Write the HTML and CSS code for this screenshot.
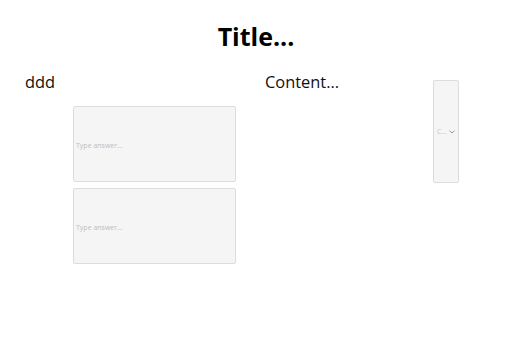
FILE: index.html
```html
<!DOCTYPE html>
<html>
<head>
<meta charset="utf-8">
<link rel="stylesheet" href="styles.css">
</head>
<body>
<h1 class="title">Title...</h1>
<div class="columns">
  <div class="col-left">
    <div class="label">ddd</div>
    <div class="answers">
      <textarea class="answer" placeholder="Type answer..."></textarea>
      <textarea class="answer" placeholder="Type answer..."></textarea>
    </div>
  </div>
  <div class="col-right">
    <div class="content">Content...</div>
    <div class="select">
      <span class="select-text">C...</span>
      <svg class="chev" width="6" height="4" viewBox="0 0 6 4"><path d="M0.5 0.7 L3 3 L5.5 0.7" fill="none" stroke="#999" stroke-width="1"/></svg>
    </div>
  </div>
</div>
</body>
</html>
```
FILE: styles.css
```css
html, body {
  margin: 0;
  padding: 0;
  background: #fff;
  font-family: "Open Sans", "Noto Sans", sans-serif;
  color: #111;
}
.title {
  margin: 0;
  padding-top: 18px;
  height: 36px;
  line-height: 36px;
  font-size: 25px;
  font-weight: 700;
  text-align: center;
  color: #000;
}
.columns {
  display: grid;
  grid-template-columns: 256px 256px;
  margin-top: 19px;
}
.col-left {
  padding-left: 25px;
}
.label {
  font-size: 16.4px;
  line-height: 22px;
  margin-top: -2px;
}
.answers {
  display: flex;
  flex-direction: column;
  gap: 6px;
  margin-left: 48px;
  margin-top: 13px;
}
.answer {
  box-sizing: border-box;
  width: 163px;
  height: 76px;
  margin: 0;
  padding: 0 2px;
  padding-top: 34px;
  background: #f5f5f5;
  border: 1px solid #dcdcdc;
  border-radius: 2px;
  resize: none;
  font-family: "Open Sans", sans-serif;
  font-size: 7px;
  line-height: 10px;
  color: #333;
  outline: none;
  display: block;
}
.answer::placeholder {
  color: #bdbdbd;
}
.col-right {
  display: flex;
  align-items: flex-start;
  padding-left: 9px;
}
.content {
  font-size: 16.4px;
  line-height: 22px;
  margin-top: -2px;
  flex: 1;
}
.select {
  box-sizing: border-box;
  width: 26px;
  height: 103px;
  margin-top: 7px;
  margin-right: 53px;
  background: #f5f5f5;
  border: 1px solid #dcdcdc;
  border-radius: 2px;
  display: flex;
  align-items: center;
  justify-content: center;
  gap: 2px;
}
.select-text {
  font-size: 7px;
  color: #c4c4c4;
}
.chev {
  display: block;
}
```
